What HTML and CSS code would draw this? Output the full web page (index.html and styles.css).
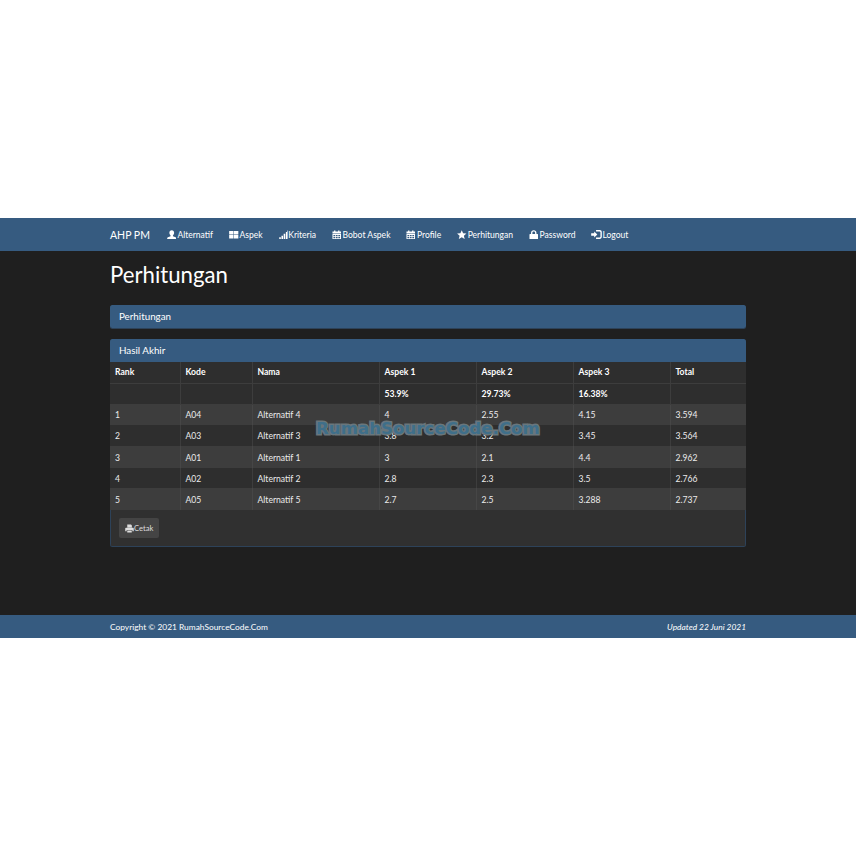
FILE: index.html
```html
<!DOCTYPE html>
<html lang="en">
<head>
    <meta charset="UTF-8">
    <meta name="viewport" content="width=device-width, initial-scale=1.0">
    <title>Perhitungan</title>
    <link rel="stylesheet" href="styles.css">
</head>
<body>
<div class="page">
    <nav class="navbar">
        <div class="container nav-inner">
            <a class="brand" href="#">AHP PM</a>
            <a class="nav-link" href="#"><svg class="icon" viewBox="0 0 12 12"><path d="M6 .4c1.900 0 3 1.300 3 3.200 0 1.400-.6 2.600-1.500 3.200v1l3.300 1.300c.7.3 1 .8 1 1.500v1.200H.2v-1.200c0-.7.3-1.200 1-1.500l3.300-1.300v-1C3.600 6.200 3 5 3 3.600 3 1.700 4.100.4 6 .4z"/></svg>Alternatif</a>
            <a class="nav-link" href="#"><svg class="icon" viewBox="0 0 12 12"><path d="M.2 1.200h5.500v4.500H.2zM6.300 1.200h5.500v4.500H6.300zM.2 6.300h5.500v4.500H.2zM6.300 6.300h5.500v4.500H6.300z"/></svg>Aspek</a>
            <a class="nav-link" href="#"><svg class="icon icon-tight" viewBox="0 0 12 12"><path d="M.3 9h2v2.500h-2zM3.100 7.200h2v4.300h-2zM5.900 4.800h2v6.700h-2zM8.700 2.500h1.500v9H8.700zM10.700.5h1.300v11h-1.300z"/></svg>Kriteria</a>
            <a class="nav-link" href="#"><svg class="icon" viewBox="0 0 12 12"><path fill-rule="evenodd" d="M.6 2h2V.6h1.700V2h3.400V.6h1.700V2h2v2.500H.6zM.6 5.200h10.800v6.400H.6zM1.800 6.400v1.400h2.200V6.400zm3.100 0v1.400h2.200V6.400zm3.100 0v1.400h2.200V6.400zM1.800 8.800v1.500h2.200V8.800zm3.100 0v1.500h2.200V8.800zm3.100 0v1.500h2.200V8.800z"/></svg>Bobot Aspek</a>
            <a class="nav-link" href="#"><svg class="icon" viewBox="0 0 12 12"><path fill-rule="evenodd" d="M.6 2h2V.6h1.700V2h3.400V.6h1.700V2h2v2.500H.6zM.6 5.200h10.800v6.400H.6zM1.800 6.400v1.400h2.200V6.400zm3.100 0v1.400h2.200V6.400zm3.100 0v1.400h2.200V6.400zM1.800 8.800v1.500h2.200V8.800zm3.100 0v1.500h2.200V8.800zm3.100 0v1.500h2.200V8.800z"/></svg>Profile</a>
            <a class="nav-link" href="#"><svg class="icon" viewBox="0 0 12 12"><path d="M6 .3l1.700 3.900 4.200.3-3.200 2.700 1 4.200L6 9.200l-3.700 2.200 1-4.200L.1 4.500l4.200-.3z"/></svg>Perhitungan</a>
            <a class="nav-link" href="#"><svg class="icon" viewBox="0 0 12 12"><path fill-rule="evenodd" d="M1.300 5h1.300V3.500C2.600 1.500 4 .4 6 .4s3.400 1.100 3.400 3.100V5h1.300c.4 0 .7.3.7.7v5.200c0 .4-.3.7-.7.7H1.300c-.4 0-.7-.3-.7-.7V5.700c0-.4.3-.7.7-.7zM4.300 5h3.400V3.500C7.700 2.500 7 2 6 2s-1.700.5-1.700 1.500z"/></svg>Password</a>
            <a class="nav-link" href="#"><svg class="icon icon-wide" viewBox="0 0 12 12"><path d="M.2 4.700h3.300V2.800l3.400 3.200-3.400 3.200V7.300H.2z"/><path d="M5.500 1.200h4c1.300 0 2.300 1 2.300 2.300v5c0 1.300-1 2.300-2.300 2.300h-4V9.400h3.900c.5 0 .9-.4.900-.9v-5c0-.5-.4-.9-.9-.9H5.500z"/></svg>Logout</a>
        </div>
    </nav>

    <main class="container content">
        <h1 class="page-title">Perhitungan</h1>

        <div class="panel">
            <div class="panel-heading">Perhitungan</div>
        </div>

        <div class="panel result-panel">
            <div class="panel-heading">Hasil Akhir</div>
            <table class="table">
                <colgroup>
                    <col class="col-rank">
                    <col class="col-kode">
                    <col class="col-nama">
                    <col class="col-aspek">
                    <col class="col-aspek">
                    <col class="col-aspek">
                    <col class="col-total">
                </colgroup>
                <thead>
                    <tr><th>Rank</th><th>Kode</th><th>Nama</th><th>Aspek 1</th><th>Aspek 2</th><th>Aspek 3</th><th>Total</th></tr>
                    <tr><th></th><th></th><th></th><th>53.9%</th><th>29.73%</th><th>16.38%</th><th></th></tr>
                </thead>
                <tbody>
                    <tr><td>1</td><td>A04</td><td>Alternatif 4</td><td>4</td><td>2.55</td><td>4.15</td><td>3.594</td></tr>
                    <tr><td>2</td><td>A03</td><td>Alternatif 3</td><td>3.8</td><td>3.2</td><td>3.45</td><td>3.564</td></tr>
                    <tr><td>3</td><td>A01</td><td>Alternatif 1</td><td>3</td><td>2.1</td><td>4.4</td><td>2.962</td></tr>
                    <tr><td>4</td><td>A02</td><td>Alternatif 2</td><td>2.8</td><td>2.3</td><td>3.5</td><td>2.766</td></tr>
                    <tr><td>5</td><td>A05</td><td>Alternatif 5</td><td>2.7</td><td>2.5</td><td>3.288</td><td>2.737</td></tr>
                </tbody>
            </table>
            <div class="panel-footer">
                <a class="btn" href="#"><svg class="icon" viewBox="0 0 12 12"><path fill-rule="evenodd" d="M3 .8h5l1.200 1.200v2.600H3zM1.300 5h9.400c.6 0 1 .4 1 1v3.500H9.800V8H2.200v1.500H.3V6c0-.6.4-1 1-1zM3 8.700h6v2.500H3z"/></svg>Cetak</a>
            </div>
            <div class="watermark">RumahSourceCode.Com</div>
        </div>
    </main>

    <footer class="footer">
        <div class="container footer-inner">
            <span>Copyright © 2021 RumahSourceCode.Com</span>
            <em>Updated 22 Juni 2021</em>
        </div>
    </footer>
</div>
</body>
</html>
```

FILE: styles.css
```css
html, body {
    margin: 0;
    padding: 0;
    background: #fff;
}

body {
    font-family: Lato, "Open Sans", sans-serif;
    font-size: 8.6px;
    color: #fff;
}

a {
    color: inherit;
    text-decoration: none;
}

.page {
    margin-top: 218px;
    height: 420px;
    display: flex;
    flex-direction: column;
    background: #1f1f1f;
}

.container {
    width: 636px;
    margin: 0 auto;
    box-sizing: border-box;
}

.navbar {
    height: 33px;
    background: #365b80;
    flex: none;
}

.nav-inner {
    height: 100%;
    display: flex;
    align-items: center;
}

.brand {
    font-size: 10.5px;
    margin-right: 9px;
}

.nav-link {
    display: flex;
    align-items: center;
    padding: 0 8px;
    font-size: 8.550px;
    white-space: nowrap;
}

.icon {
    width: 9.500px;
    height: 9.500px;
    margin-right: 1px;
    fill: currentColor;
    flex: none;
}

.icon-tight {
    margin-right: 0;
}

.icon-wide {
    width: 11px;
    height: 11px;
    margin-right: 0;
}

.content {
    flex: 1;
}

.page-title {
    font-size: 22.200px;
    font-weight: 400;
    line-height: 26px;
    margin: 11px 0 17px;
}

.panel {
    position: relative;
    border-radius: 2.500px;
    box-shadow: 0 1px 0 #2d4259;
    margin-bottom: 11px;
    background: #303030;
    overflow: hidden;
}

.panel-heading {
    height: 23px;
    line-height: 22px;
    padding: 0 9px;
    font-size: 9.800px;
    background: #365b80;
}

.result-panel {
    height: 207px;
}

.table {
    width: 636px;
    table-layout: fixed;
    border-collapse: collapse;
}

.col-rank { width: 70px; }
.col-kode { width: 72px; }
.col-nama { width: 127px; }
.col-aspek { width: 97px; }
.col-total { width: 76px; }

.table th,
.table td {
    height: 21px;
    padding: 0 5px;
    box-sizing: border-box;
    text-align: left;
    font-size: 8.6px;
    border-left: 1px solid #3d3d3d;
}

.table th:first-child,
.table td:first-child {
    border-left: 0;
}

.table th {
    font-weight: 700;
    background: #2e2e2e;
    border-bottom: 1px solid #3d3d3d;
}

.table td {
    padding-top: 1px;
    color: #ececec;
}

.table tbody tr:nth-child(odd) td {
    background: #3d3d3d;
    border-left-color: #464646;
}

.table tbody tr:nth-child(even) td {
    background: #2e2e2e;
}

.table tbody tr:nth-child(3) td,
.table tbody tr:nth-child(5) td {
    height: 22px;
}

.table tbody tr:nth-child(4) td {
    height: 20px;
}

.panel-footer {
    padding: 8px 8px 0;
    height: 37px;
    box-sizing: border-box;
    border: 1px solid #2d4259;
    border-width: 0 1px;
}

.btn {
    display: inline-flex;
    align-items: center;
    height: 20px;
    padding: 0 6px;
    font-size: 7.600px;
    color: #ddd;
    background: #444;
    border-radius: 2px;
}

.btn .icon {
    width: 9px;
    height: 9px;
    margin-right: 0;
}

.watermark {
    position: absolute;
    left: 206px;
    top: 80px;
    font-family: "DejaVu Sans", sans-serif;
    font-weight: 700;
    font-size: 16.500px;
    letter-spacing: .1px;
    white-space: nowrap;
    color: #3f6f8a;
    -webkit-text-stroke: 3px #69767c;
    paint-order: stroke fill;
}

.footer {
    height: 23px;
    background: #365b80;
    flex: none;
}

.footer-inner {
    height: 100%;
    display: flex;
    align-items: center;
    justify-content: space-between;
    font-size: 8.400px;
}
```
